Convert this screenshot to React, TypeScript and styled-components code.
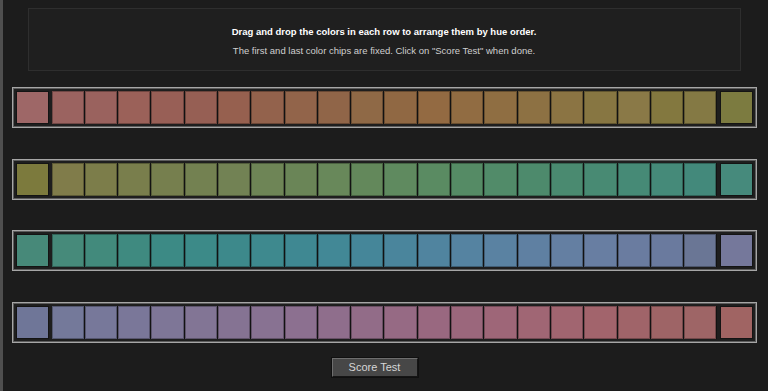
import React from "react";
import styled, { createGlobalStyle } from "styled-components";

const GlobalStyle = createGlobalStyle`
  html, body {
    margin: 0;
    padding: 0;
    background: #1c1c1c;
  }
  body {
    width: 768px;
    height: 391px;
    overflow: hidden;
    box-shadow: inset 3px 0 0 #4f4f4f;
    font-family: "Liberation Sans", Arial, sans-serif;
  }
`;

const Page = styled.div`
  width: 745px;
  margin: 0 auto;
  padding-top: 8px;
  display: flex;
  flex-direction: column;
  align-items: center;
`;

const Instructions = styled.div`
  width: 713px;
  box-sizing: border-box;
  height: 63px;
  border: 1px solid #2e2e2e;
  background: #1f1f1f;
  padding-top: 13px;
  text-align: center;
  font-size: 9.5px;
  line-height: 19px;
`;

const Lead = styled.div`
  color: #ffffff;
  font-weight: bold;
`;

const Note = styled.div`
  color: #cfcfcf;
`;

const Rows = styled.div`
  width: 100%;
  margin-top: 16px;
  display: flex;
  flex-direction: column;
  gap: 30.5px;
`;

const Frame = styled.div`
  box-sizing: border-box;
  width: 745px;
  height: 41px;
  border: 1px solid #a6a6a6;
  box-shadow: inset 0 0 0 1px #5c5c5c;
  background: #1e1e1e;
  padding: 3px;
  display: flex;
  align-items: stretch;
  gap: 3px;
`;

const FixedChip = styled.div<{ $color: string }>`
  box-sizing: border-box;
  width: 33px;
  flex: none;
  background: ${(p) => p.$color};
  border: 1px solid #141414;
`;

const Track = styled.div`
  flex: 1;
  display: flex;
  gap: 1px;
  background: #121212;
`;

const Chip = styled.div<{ $color: string }>`
  flex: 1;
  background: ${(p) => p.$color};
  box-shadow: inset 0 0 0 1px rgba(0, 0, 0, 0.28);
  cursor: grab;
`;

const ButtonBar = styled.div`
  width: 100%;
  box-sizing: border-box;
  padding-right: 19px;
  margin-top: 15.5px;
  display: flex;
  justify-content: center;
`;

const ScoreButton = styled.button`
  width: 86px;
  height: 19px;
  box-sizing: border-box;
  padding: 0;
  background: #474747;
  border: 1px solid;
  border-color: #6e6e6e #151515 #151515 #6e6e6e;
  box-shadow: 0 0 0 1px #101010;
  color: #d6d6d6;
  font-family: "Liberation Sans", Arial, sans-serif;
  font-size: 11px;
  line-height: 17px;
  text-align: center;
  cursor: pointer;
`;

const rows: string[][] = [
  [
    "#9e6767", "#9b6360", "#9a625e", "#9b6159", "#985f56", "#965f54", "#96604f",
    "#93624c", "#92644a", "#906548", "#8f6946", "#906843", "#936a42", "#916c42",
    "#8f6e42", "#8d7143", "#8b7443", "#877642", "#8a7947", "#83783f", "#847944",
    "#7c7b40",
  ],
  [
    "#7c7a3d", "#807c4a", "#7c7d4a", "#797e4c", "#767f4e", "#738151", "#728254",
    "#6e8556", "#6a8557", "#68885a", "#63885b", "#5f8a5f", "#5a8b62", "#558b65",
    "#518b69", "#4d8a6c", "#4a8a70", "#488a73", "#468a76", "#458a79", "#43897b",
    "#468a7c",
  ],
  [
    "#478979", "#468a7a", "#428a7c", "#3f8a80", "#3c8a85", "#3c8a88", "#3d898b",
    "#3e898e", "#3f8892", "#428896", "#458699", "#4a859c", "#50849f", "#5583a1",
    "#5a82a2", "#5f80a2", "#647fa2", "#687ea2", "#6a7ca0", "#6a7a9e", "#6a7695",
    "#75789b",
  ],
  [
    "#6f7698", "#74799a", "#77789a", "#7a7799", "#7e7697", "#827595", "#857393",
    "#887292", "#8c7090", "#8f6e8c", "#926c88", "#966a84", "#996880", "#9b677c",
    "#9e6678", "#a06674", "#a16570", "#a2646c", "#a06469", "#9e6466", "#9e6566",
    "#a06463",
  ],
];

export default function App() {
  return (
    <>
      <GlobalStyle />
      <Page>
        <Instructions>
          <Lead>Drag and drop the colors in each row to arrange them by hue order.</Lead>
          <Note>The first and last color chips are fixed. Click on "Score Test" when done.</Note>
        </Instructions>
        <Rows>
          {rows.map((row, r) => (
            <Frame key={r}>
              <FixedChip $color={row[0]} />
              <Track>
                {row.slice(1, -1).map((c, i) => (
                  <Chip key={i} $color={c} draggable />
                ))}
              </Track>
              <FixedChip $color={row[row.length - 1]} />
            </Frame>
          ))}
        </Rows>
        <ButtonBar>
          <ScoreButton>Score Test</ScoreButton>
        </ButtonBar>
      </Page>
    </>
  );
}
